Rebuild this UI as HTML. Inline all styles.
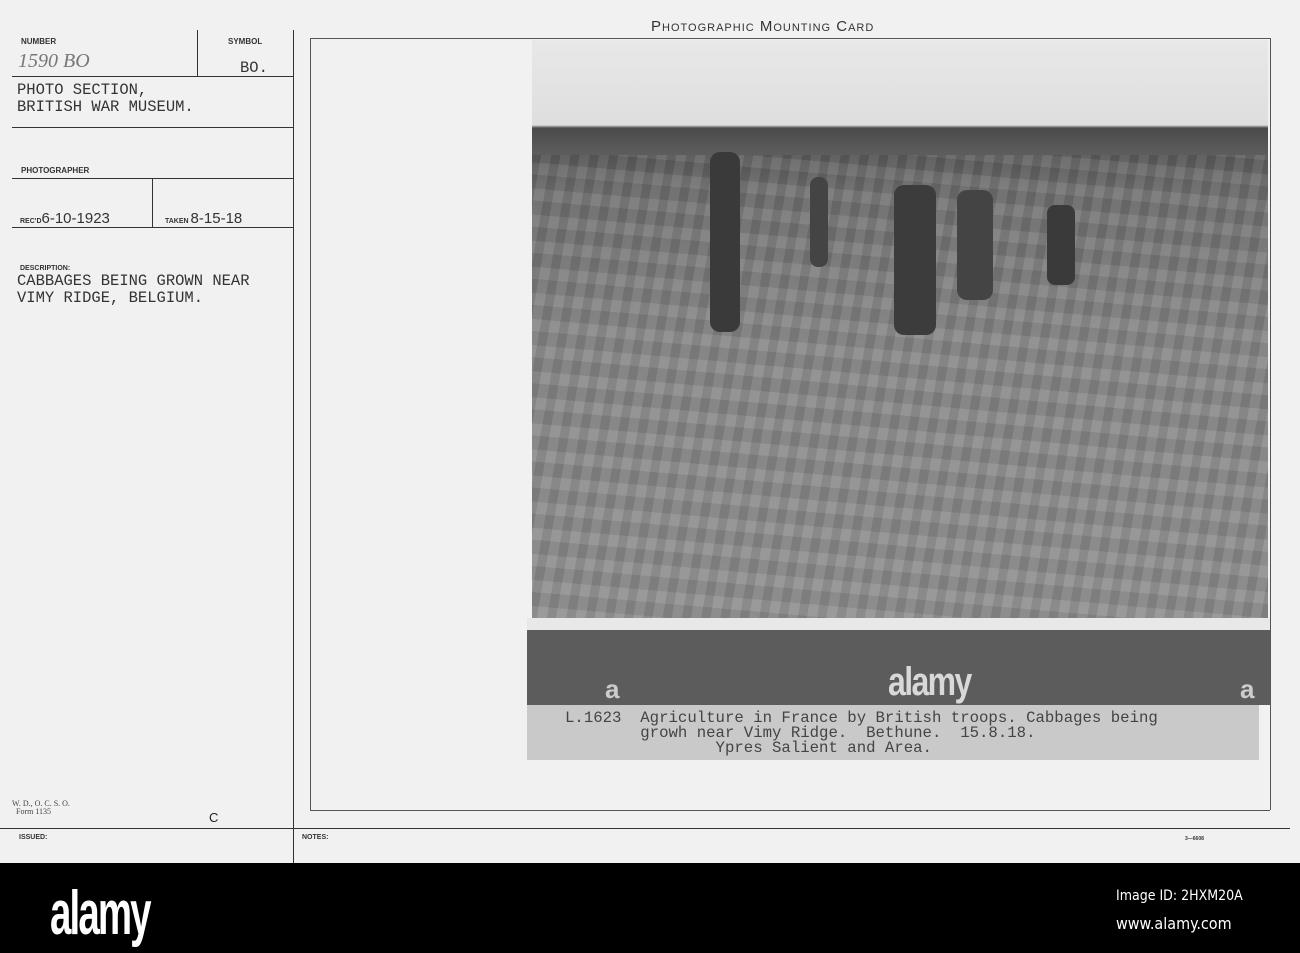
<!DOCTYPE html>
<html><head><meta charset="utf-8"><style>
*{margin:0;padding:0;box-sizing:border-box}
body{width:1300px;height:953px;overflow:hidden;background:#000;position:relative;font-family:"Liberation Mono",monospace;color:#222}
.card{position:absolute;left:0;top:0;width:1300px;height:863px;background:#f1f1f1}
.a{position:absolute}
.l{position:absolute;background:#333}
.sm{font-family:"Liberation Sans",sans-serif;font-size:8px;font-weight:bold;color:#333}
.tw{font-size:15.5px;color:#333;line-height:17px;letter-spacing:0}
</style></head><body>
<div class="card">
 <div class="a sm" style="left:21px;top:37px">NUMBER</div>
 <div class="a sm" style="left:228px;top:37px">SYMBOL</div>
 <div class="a" style="left:18px;top:50px;font-family:'Liberation Serif',serif;font-style:italic;font-size:20px;color:#777">1590 BO</div>
 <div class="l" style="left:197px;top:30px;width:1px;height:46px"></div>
 <div class="a tw" style="left:240px;top:60px">BO.</div>
 <div class="l" style="left:12px;top:76px;width:281px;height:1px"></div>
 <div class="a tw" style="left:17px;top:82px">PHOTO SECTION,<br>BRITISH WAR MUSEUM.</div>
 <div class="l" style="left:12px;top:127px;width:281px;height:1px"></div>
 <div class="a sm" style="left:21px;top:166px">PHOTOGRAPHER</div>
 <div class="l" style="left:12px;top:178px;width:281px;height:1px"></div>
 <div class="l" style="left:152px;top:178px;width:1px;height:50px"></div>
 <div class="a" style="left:20px;top:210px;font-family:'Liberation Sans';font-size:15px;color:#333"><span class="sm" style="font-size:7px">REC'D</span>6-10-1923</div>
 <div class="a" style="left:165px;top:210px;font-family:'Liberation Sans';font-size:15px;color:#333"><span class="sm" style="font-size:7px">TAKEN </span>8-15-18</div>
 <div class="l" style="left:12px;top:227px;width:281px;height:1px"></div>
 <div class="a sm" style="left:20px;top:265px;font-size:7px">DESCRIPTION:</div>
 <div class="a tw" style="left:17px;top:273px">CABBAGES BEING GROWN NEAR<br>VIMY RIDGE, BELGIUM.</div>
 <div class="a" style="left:12px;top:800px;font-family:'Liberation Serif',serif;font-size:8px;color:#444;line-height:8px">W. D., O. C. S. O.<br>&nbsp;&nbsp;Form 1135</div>
 <div class="a" style="left:209px;top:810px;font-family:'Liberation Sans';font-size:13px">C</div>
 <div class="l" style="left:0;top:828px;width:1290px;height:1px"></div>
 <div class="a sm" style="left:19px;top:834px;font-size:7px">ISSUED:</div>
 <div class="a sm" style="left:302px;top:834px;font-size:7px">NOTES:</div>
 <div class="a sm" style="left:1185px;top:836px;font-size:5px">3—6608</div>
 <div class="l" style="left:293px;top:30px;width:1px;height:833px"></div>
 <div class="l" style="left:310px;top:38px;width:1px;height:772px;background:#555"></div>
 <div class="l" style="left:310px;top:38px;width:960px;height:1px;background:#555"></div>
 <div class="l" style="left:1270px;top:38px;width:1px;height:772px;background:#555"></div>
 <div class="l" style="left:310px;top:810px;width:960px;height:1px;background:#555"></div>
 <div class="a" style="left:651px;top:18px;font-family:'Liberation Sans';font-size:15px;letter-spacing:1px;font-variant:small-caps;color:#333">Photographic Mounting Card</div>
 <div class="a" style="left:532px;top:40px;width:736px;height:578px;background:linear-gradient(#e8e8e8 0,#dedede 85px,#4a4a4a 88px,#5a5a5a 110px,#707070 150px,#868686 300px,#8e8e8e 578px);overflow:hidden">
  <div class="a" style="left:0;top:115px;width:736px;height:463px;background:repeating-linear-gradient(100deg,rgba(0,0,0,.06) 0 9px,rgba(255,255,255,.06) 9px 19px),repeating-linear-gradient(5deg,rgba(255,255,255,.05) 0 12px,rgba(0,0,0,.06) 12px 26px)"></div>
  <div class="a" style="left:178px;top:112px;width:30px;height:180px;background:#3a3a3a;border-radius:10px"></div>
  <div class="a" style="left:278px;top:137px;width:18px;height:90px;background:#444;border-radius:8px"></div>
  <div class="a" style="left:362px;top:145px;width:42px;height:150px;background:#3c3c3c;border-radius:10px"></div>
  <div class="a" style="left:425px;top:150px;width:36px;height:110px;background:#444;border-radius:10px"></div>
  <div class="a" style="left:515px;top:165px;width:28px;height:80px;background:#3a3a3a;border-radius:8px"></div>
 </div>
 <div class="a" style="left:527px;top:618px;width:743px;height:12px;background:#e8e8e8"></div>
 <div class="a" style="left:527px;top:630px;width:743px;height:75px;background:#5c5c5c"></div>
 <div class="a" style="left:527px;top:705px;width:732px;height:55px;background:#c9c9c9"></div>
 <div class="a" style="left:888px;top:660px;font-family:'Liberation Sans';font-weight:bold;font-size:40px;color:#d8d8d8;transform:scaleX(.8);transform-origin:left;letter-spacing:-2px">alamy</div>
 <div class="a" style="left:605px;top:674px;font-family:'Liberation Sans';font-weight:bold;font-size:26px;color:#ccc">a</div>
 <div class="a" style="left:1240px;top:674px;font-family:'Liberation Sans';font-weight:bold;font-size:26px;color:#ccc">a</div>
 <div class="a" style="left:565px;top:711px;font-size:16px;line-height:15px;color:#444;white-space:pre;transform:scaleX(.98);transform-origin:left">L.1623  Agriculture in France by British troops. Cabbages being
        growh near Vimy Ridge.  Bethune.  15.8.18.
                Ypres Salient and Area.</div>
</div>
<div class="a" style="left:50px;top:878px;font-family:'Liberation Sans';font-weight:bold;font-size:62px;color:#fff;transform:scaleX(.62);transform-origin:left;letter-spacing:-3px">alamy</div>
<div class="a" style="left:1116px;top:888px;font-family:'DejaVu Sans Condensed','Liberation Sans';font-size:14px;color:#fff">Image ID: 2HXM20A</div>
<div class="a" style="left:1116px;top:914px;font-family:'DejaVu Sans Condensed','Liberation Sans';font-size:16px;color:#fff">www.alamy.com</div>
</body></html>
